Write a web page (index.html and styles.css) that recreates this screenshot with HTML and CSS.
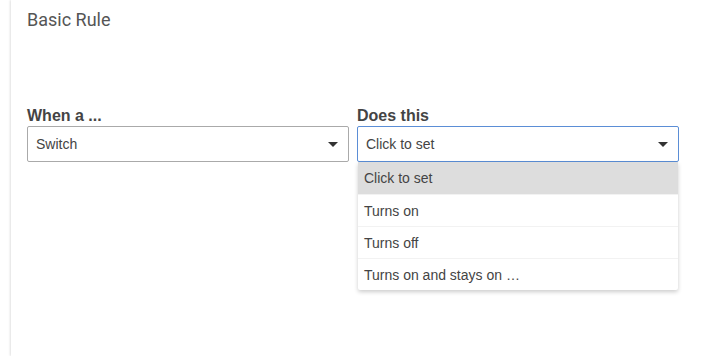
FILE: index.html
```html
<!DOCTYPE html>
<html>
<head>
<meta charset="utf-8">
<link rel="stylesheet" href="styles.css">
</head>
<body>
<div class="card">
  <h1 class="title">Basic Rule</h1>
  <div class="row">
    <div class="field">
      <div class="label">When a ...</div>
      <div class="select">
        <span class="value">Switch</span>
        <span class="caret"></span>
      </div>
    </div>
    <div class="field">
      <div class="label">Does this</div>
      <div class="select open">
        <span class="value">Click to set</span>
        <span class="caret"></span>
        <ul class="menu">
          <li class="item active">Click to set</li>
          <li class="item">Turns on</li>
          <li class="item">Turns off</li>
          <li class="item">Turns on and stays on …</li>
        </ul>
      </div>
    </div>
  </div>
</div>
</body>
</html>
```
FILE: styles.css
```css
html, body {
  margin: 0;
  padding: 0;
  background: #fff;
  height: 100%;
}
.card {
  margin-left: 11px;
  min-height: 100%;
  box-sizing: border-box;
  box-shadow: -1px 0 2px rgba(0,0,0,0.12);
  padding: 9px 16px 0 16px;
  font-family: "Liberation Sans", Arial, sans-serif;
}
.title {
  margin: 0;
  font-family: Roboto, "Liberation Sans", sans-serif;
  font-weight: 400;
  font-size: 18px;
  line-height: 22px;
  color: #555;
}
.row {
  display: flex;
  gap: 8px;
  margin-top: 75px;
}
.field {
  width: 322px;
}
.label {
  font-weight: bold;
  font-size: 16px;
  line-height: 20px;
  color: #444;
  margin-bottom: 0;
}
.select {
  position: relative;
  box-sizing: border-box;
  height: 36px;
  border: 1px solid #aaa;
  border-radius: 2px;
  display: flex;
  align-items: center;
  padding: 0 10px 0 8px;
  font-size: 14px;
  color: #444;
}
.select.open {
  border-color: #5b8ed6;
}
.value {
  flex: 1;
}
.caret {
  width: 0;
  height: 0;
  border-left: 5px solid transparent;
  border-right: 5px solid transparent;
  border-top: 5px solid #333;
  margin-top: 1px;
}
.menu {
  position: absolute;
  left: 0;
  right: 0;
  top: 35px;
  margin: 0;
  padding: 0;
  list-style: none;
  background: #fff;
  box-shadow: 0 2px 4px rgba(0,0,0,0.2);
  border-radius: 0 0 2px 2px;
}
.item {
  height: 32px;
  line-height: 32px;
  padding: 0 6px;
  border-top: 1px solid #f2f2f2;
  box-sizing: border-box;
  font-size: 14px;
  color: #444;
}
.item:first-child {
  border-top: 0;
}
.item.active {
  background: #ddd;
}
```
